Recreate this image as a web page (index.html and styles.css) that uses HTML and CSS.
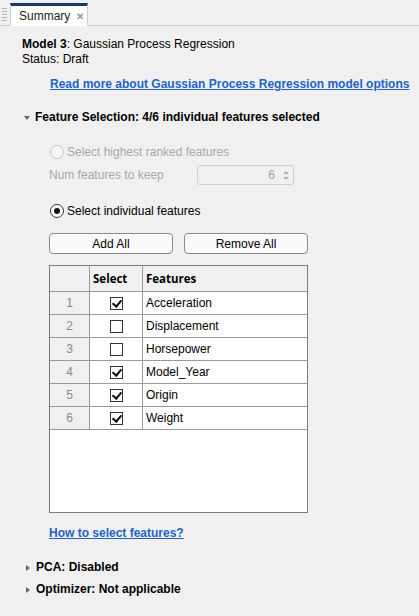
FILE: index.html
```html
<!DOCTYPE html>
<html>
<head>
<meta charset="utf-8">
<link rel="stylesheet" href="styles.css">
</head>
<body>
<div class="tabbar">
  <div class="grip"></div>
  <div class="tab"><span class="tab-title">Summary</span><span class="tab-close">✕</span></div>
</div>
<div class="content">
  <div class="model"><b>Model 3</b>: Gaussian Process Regression</div>
  <div class="status">Status: Draft</div>
  <a class="link doc-link">Read more about Gaussian Process Regression model options</a>

  <div class="section-head"><span class="tri-down"></span>Feature Selection: 4/6 individual features selected</div>
  <div class="section-body">
    <div class="radio-row disabled first"><span class="radio"></span>Select highest ranked features</div>
    <div class="num-row disabled">
      <span class="num-label">Num features to keep</span>
      <div class="spinner"><span class="spin-val">6</span><span class="spin-arrows"><span class="up"></span><span class="down"></span></span></div>
    </div>
    <div class="radio-row radio-sel"><span class="radio on"></span>Select individual features</div>
    <div class="buttons">
      <button class="btn">Add All</button>
      <button class="btn">Remove All</button>
    </div>
    <div class="table">
      <div class="row head">
        <div class="c-idx"></div>
        <div class="c-sel">Select</div>
        <div class="c-feat">Features</div>
      </div>
      <div class="row"><div class="c-idx">1</div><div class="c-sel"><span class="cb on"></span></div><div class="c-feat">Acceleration</div></div>
      <div class="row"><div class="c-idx">2</div><div class="c-sel"><span class="cb"></span></div><div class="c-feat">Displacement</div></div>
      <div class="row"><div class="c-idx">3</div><div class="c-sel"><span class="cb"></span></div><div class="c-feat">Horsepower</div></div>
      <div class="row"><div class="c-idx">4</div><div class="c-sel"><span class="cb on"></span></div><div class="c-feat">Model_Year</div></div>
      <div class="row"><div class="c-idx">5</div><div class="c-sel"><span class="cb on"></span></div><div class="c-feat">Origin</div></div>
      <div class="row"><div class="c-idx">6</div><div class="c-sel"><span class="cb on"></span></div><div class="c-feat">Weight</div></div>
    </div>
    <a class="link how-link">How to select features?</a>
  </div>

  <div class="section-head collapsed pca"><span class="tri-right"></span>PCA: Disabled</div>
  <div class="section-head collapsed opt"><span class="tri-right"></span>Optimizer: Not applicable</div>
</div>
</body>
</html>
```

FILE: styles.css
```css
* { box-sizing: border-box; }
html, body { margin: 0; padding: 0; }
body {
  width: 419px;
  height: 616px;
  background: #f0f0f0;
  font-family: "Liberation Sans", Arial, sans-serif;
  font-size: 12px;
  color: #000;
  overflow: hidden;
}
.tabbar {
  height: 26px;
  border-bottom: 1px solid #c9c9c9;
  display: flex;
  align-items: flex-end;
  position: relative;
}
.grip {
  position: absolute;
  left: 2px;
  top: 8px;
  width: 5px;
  height: 14px;
  background: repeating-linear-gradient(#b5b5b5 0 1px, transparent 1px 3px);
}
.tab {
  margin-left: 10px;
  width: 78px;
  height: 23px;
  margin-bottom: -1px;
  background: #fff;
  border-top: 3px solid #1b3a63;
  border-left: 1px solid #d0d0d0;
  border-right: 1px solid #d0d0d0;
  display: flex;
  align-items: center;
  padding-left: 8px;
  font-size: 12px;
}
.tab-title { color: #222; }
.tab-close { margin-left: 6px; color: #999; font-size: 10px; font-weight: bold; }

.content { padding: 11px 0 0 22px; }
.model, .status { line-height: 15px; }
.link {
  color: #1f63c6;
  font-weight: bold;
  text-decoration: underline;
  display: block;
  line-height: 15px;
}
.doc-link { margin: 10px 0 0 28px; }

.section-head {
  font-weight: bold;
  line-height: 15px;
  margin-top: 18px;
  display: flex;
  align-items: center;
}
.tri-down {
  width: 0; height: 0;
  border-left: 3.5px solid transparent;
  border-right: 3.5px solid transparent;
  border-top: 4px solid #666;
  margin: 0 5px 0 2px;
}
.tri-right {
  width: 0; height: 0;
  border-top: 3.5px solid transparent;
  border-bottom: 3.5px solid transparent;
  border-left: 4px solid #666;
  margin: 0 6px 0 4px;
}
.section-head.pca { margin-top: 19px; }
.section-head.opt { margin-top: 7px; }

.section-body { padding-left: 27px; }
.radio-row {
  display: flex;
  align-items: center;
  height: 16px;
  margin-top: 18px;
}
.radio-row.first { margin-top: 19px; }
.radio {
  width: 14px; height: 14px;
  border-radius: 50%;
  border: 1px solid #333;
  background: #fff;
  margin: 0 3px 0 1px;
  position: relative;
}
.radio.on::after {
  content: "";
  position: absolute;
  left: 3px; top: 3px;
  width: 6px; height: 6px;
  border-radius: 50%;
  background: #111;
}
.disabled { color: #a8a8a8; }
.disabled .radio { border-color: #c4c4c4; background: #f4f4f4; }
.radio-sel { margin-top: 18px; }

.num-row {
  display: flex;
  align-items: center;
  height: 20px;
  margin-top: 5px;
}
.num-label { width: 148px; }
.spinner {
  width: 97px;
  height: 20px;
  border: 1px solid #cfcfcf;
  border-radius: 3px;
  background: #f0f0f0;
  display: flex;
  align-items: center;
  justify-content: flex-end;
  padding-right: 4px;
}
.spin-val { margin-right: 8px; color: #a0a0a0; }
.spin-arrows { display: flex; flex-direction: column; gap: 3px; }
.spin-arrows .up {
  width: 0; height: 0;
  border-left: 3px solid transparent;
  border-right: 3px solid transparent;
  border-bottom: 3px solid #b0b0b0;
}
.spin-arrows .down {
  width: 0; height: 0;
  border-left: 3px solid transparent;
  border-right: 3px solid transparent;
  border-top: 3px solid #b0b0b0;
}

.buttons {
  display: flex;
  gap: 11px;
  margin-top: 14px;
  width: 259px;
}
.btn {
  flex: 1;
  height: 21px;
  border: 1px solid #8a8a8a;
  border-radius: 4px;
  background: #fafafa;
  font-family: "Liberation Sans", Arial, sans-serif;
  font-size: 12px;
  color: #000;
  padding: 0;
}

.table {
  margin-top: 11px;
  width: 259px;
  height: 248px;
  border: 1px solid #7a7a7a;
  background: #fff;
}
.row {
  display: flex;
  height: 23px;
  border-bottom: 1px solid #9a9a9a;
}
.row > div { display: flex; align-items: center; }
.row.head { height: 26px; font-family: "Open Sans", "Noto Sans", sans-serif; font-weight: bold; font-size: 11.5px; }
.c-idx {
  width: 40px;
  background: #f0f0f0;
  border-right: 1px solid #9a9a9a;
  justify-content: center;
  color: #8a8a8a;
}
.c-sel {
  width: 53px;
  border-right: 1px solid #9a9a9a;
  justify-content: center;
}
.row.head .c-sel { justify-content: flex-start; padding-left: 3px; background: #f0f0f0; }
.row.head .c-feat { background: #f0f0f0; }
.c-feat { flex: 1; padding-left: 3px; }
.cb {
  width: 13px; height: 13px;
  border: 1px solid #333;
  background: #fff;
  position: relative;
}
.cb.on::after {
  content: "";
  position: absolute;
  left: 3px; top: 0px;
  width: 4px; height: 7px;
  border-right: 2px solid #111;
  border-bottom: 2px solid #111;
  transform: rotate(40deg);
}
.how-link { margin-top: 13px; display: inline-block; }
```
